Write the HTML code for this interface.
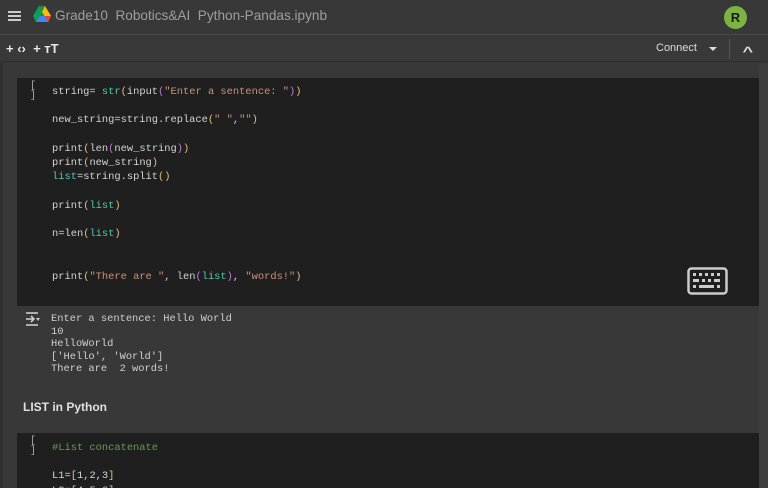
<!DOCTYPE html>
<html><head><style>
*{margin:0;padding:0;box-sizing:border-box}
html,body{width:768px;height:488px;overflow:hidden}
body{background:#383838;font-family:"Liberation Sans",sans-serif;position:relative}
.top{position:absolute;left:0;top:0;width:768px;height:35px;background:#383838;border-bottom:1px solid #4a4a4a}
.tb{position:absolute;left:0;top:36px;width:768px;height:26px;background:#393939;border-bottom:1px solid #2e2e2e}
.main{position:absolute;left:0;top:63px;width:759px;height:425px;background:#383838;border-left:3px solid #2f2f2f}
.sb{position:absolute;left:759px;top:63px;width:9px;height:425px;background:#3e3e3e}
.cell{position:absolute;left:17px;width:742px;background:#1f1f1f}
.code{position:absolute;left:52px;font-family:"Liberation Mono",monospace;font-size:10.4px;line-height:14.2px;color:#d4d4d4;white-space:pre}
.out{position:absolute;left:51px;top:313px;font-family:"Liberation Mono",monospace;font-size:10.4px;line-height:12.6px;color:#d0d0d0;white-space:pre}
.y{color:#e5c07b}.m{color:#c678dd}.t{color:#4ec9b0}.s{color:#ce9178}.g{color:#6a9955}
.br{position:absolute;left:30px;font-family:"Liberation Mono",monospace;font-size:10px;color:#aaa;line-height:10px}
</style></head><body>
<div class="top">
 <div style="position:absolute;left:8px;top:11px;width:13px;height:2px;background:#ccc;box-shadow:0 4px 0 #ccc,0 8px 0 #ccc"></div>
 <svg style="position:absolute;left:33px;top:6px" width="18" height="16" viewBox="0 0 18 16"><polygon points="6,0 12,0 18,10 15,16 3,16 0,10" fill="#1e8e3e"/><polygon points="12,0 18,10 15,16 9,6" fill="#fbbc04"/><polygon points="3,16 15,16 18,10 6,10" fill="#4285f4"/><polygon points="6,0 9,6 3,16 0,10" fill="#0f9d58"/><polygon points="15,16 18,10 12,10" fill="#ea4335"/></svg>
 <div style="position:absolute;left:55px;top:8px;font-size:13.6px;color:#9e9e9e;white-space:pre">Grade10  Robotics&amp;AI  Python-Pandas.ipynb</div>
 <div style="position:absolute;left:724px;top:6px;width:23px;height:23px;border-radius:50%;background:#7cb342;color:#1a1a1a;font-weight:bold;font-size:13px;text-align:center;line-height:23px">R</div>
</div>
<div class="tb">
 <div style="position:absolute;left:6px;top:5px;font-size:13px;color:#e8e8e8;font-weight:bold;white-space:pre">+ ‹›  + ᴛT</div>
 <div style="position:absolute;left:656px;top:6px;font-size:11px;color:#ddd">Connect</div>
 <div style="position:absolute;left:709px;top:11px;border-left:4px solid transparent;border-right:4px solid transparent;border-top:4px solid #ddd"></div>
 <div style="position:absolute;left:729px;top:3px;width:1px;height:20px;background:#555"></div>
 <div style="position:absolute;left:744px;top:8px;font-size:13px;color:#ddd;font-weight:bold;transform:scaleX(1.4)">^</div>
</div>
<div class="main"></div>
<div class="sb"></div>
<div class="cell" style="top:78px;height:228px"></div>
<div class="br" style="top:82px">[<br>]</div>
<div class="code" style="top:85px">string= <span class="t">str</span><span class="y">(</span>input<span class="m">(</span><span class="s">"Enter a sentence: "</span><span class="m">)</span><span class="y">)</span>

new_string=string.replace<span class="y">(</span><span class="s">" "</span>,<span class="s">""</span><span class="y">)</span>

print<span class="y">(</span>len<span class="m">(</span>new_string<span class="m">)</span><span class="y">)</span>
print<span class="y">(</span>new_string<span class="y">)</span>
<span class="t">list</span>=string.split<span class="y">()</span>

print<span class="y">(</span><span class="t">list</span><span class="y">)</span>

n=len<span class="y">(</span><span class="t">list</span><span class="y">)</span>


print<span class="y">(</span><span class="s">"There are "</span>, len<span class="m">(</span><span class="t">list</span><span class="m">)</span>, <span class="s">"words!"</span><span class="y">)</span></div>
<svg style="position:absolute;left:687px;top:267px" width="41" height="28" viewBox="0 0 41 28"><rect x="1.5" y="1.5" width="38" height="25" rx="3" fill="none" stroke="#ccc" stroke-width="2.5"/><g fill="#ccc"><rect x="6" y="6" width="3" height="3"/><rect x="12" y="6" width="3" height="3"/><rect x="18" y="6" width="3" height="3"/><rect x="24" y="6" width="3" height="3"/><rect x="30" y="6" width="3" height="3"/><rect x="6" y="12" width="6" height="3"/><rect x="15" y="12" width="3" height="3"/><rect x="21" y="12" width="3" height="3"/><rect x="27" y="12" width="6" height="3"/><rect x="6" y="18" width="3" height="3"/><rect x="12" y="18" width="15" height="3"/><rect x="30" y="18" width="3" height="3"/></g></svg>
<svg style="position:absolute;left:25px;top:312px" width="16" height="14" viewBox="0 0 16 14"><g stroke="#ccc" stroke-width="1.6" fill="none"><line x1="1" y1="1" x2="13" y2="1"/><line x1="1" y1="13" x2="13" y2="13"/><line x1="1" y1="7" x2="9" y2="7"/><polyline points="6,4 9,7 6,10"/></g><polygon points="11,6 15,6 13,9" fill="#ccc"/></svg>
<div class="out">Enter a sentence: Hello World
10
HelloWorld
['Hello', 'World']
There are  2 words!</div>
<div style="position:absolute;left:23px;top:400px;font-size:12px;font-weight:bold;color:#e0e0e0">LIST in Python</div>
<div class="cell" style="top:433px;height:55px"></div>
<div class="br" style="top:437px">[<br>]</div>
<div class="code" style="top:441px"><span class="g">#List concatenate</span>

L1=<span class="y">[</span>1,2,3<span class="y">]</span>
L2=<span class="y">[</span>4,5,6<span class="y">]</span></div>
</body></html>
